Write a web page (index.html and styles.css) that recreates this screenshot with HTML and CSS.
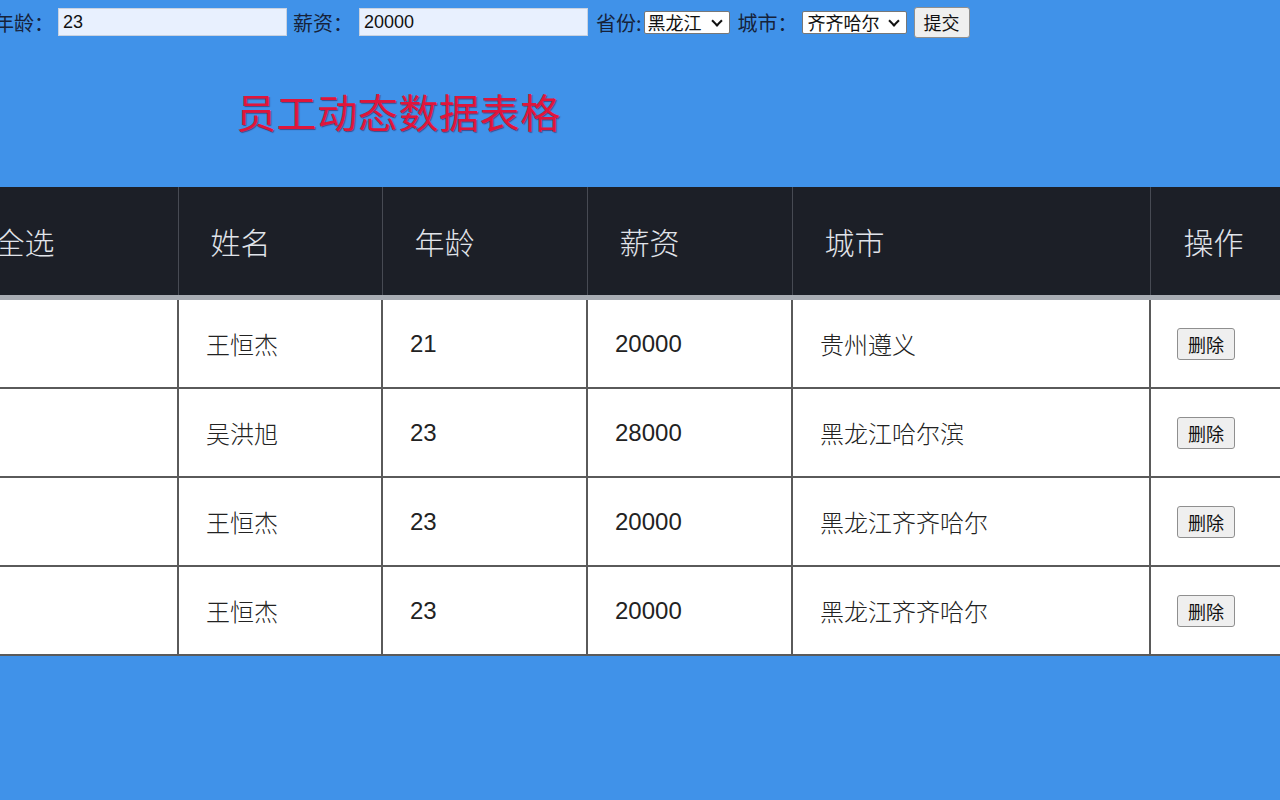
FILE: index.html
```html
<!DOCTYPE html>
<html lang="zh">
<head>
<meta charset="utf-8">
<title>员工动态数据表格</title>
<link rel="stylesheet" href="styles.css">
</head>
<body>
<div class="page">
  <form class="form-row">
    <label class="lbl lbl-first">年龄：</label>
    <input class="field" type="text" value="23">
    <label class="lbl lbl-gap">薪资：</label>
    <input class="field" type="text" value="20000">
    <label class="lbl lbl-gap2">省份:</label>
    <span class="sel-wrap"><select class="sel sel-prov"><option>黑龙江</option></select></span>
    <label class="lbl lbl-gap3">城市：</label>
    <span class="sel-wrap"><select class="sel sel-city"><option>齐齐哈尔</option></select></span>
    <button class="btn-submit" type="button">提交</button>
  </form>

  <h1 class="title">员工动态数据表格</h1>

  <table class="grid">
    <colgroup>
      <col class="c1"><col class="c2"><col class="c3"><col class="c4"><col class="c5"><col class="c6">
    </colgroup>
    <thead>
      <tr>
        <th>全选</th><th>姓名</th><th>年龄</th><th>薪资</th><th>城市</th><th>操作</th>
      </tr>
    </thead>
    <tbody>
      <tr><td></td><td>王恒杰</td><td class="num">21</td><td class="num">20000</td><td>贵州遵义</td><td class="op"><button class="btn-del" type="button">删除</button></td></tr>
      <tr><td></td><td>吴洪旭</td><td class="num">23</td><td class="num">28000</td><td>黑龙江哈尔滨</td><td class="op"><button class="btn-del" type="button">删除</button></td></tr>
      <tr><td></td><td>王恒杰</td><td class="num">23</td><td class="num">20000</td><td>黑龙江齐齐哈尔</td><td class="op"><button class="btn-del" type="button">删除</button></td></tr>
      <tr><td></td><td>王恒杰</td><td class="num">23</td><td class="num">20000</td><td>黑龙江齐齐哈尔</td><td class="op"><button class="btn-del" type="button">删除</button></td></tr>
    </tbody>
  </table>
</div>
</body>
</html>
```

FILE: styles.css
```css
html, body {
  margin: 0;
  padding: 0;
  overflow: hidden;
  background: #4092e9;
}

body {
  width: 1280px;
  height: 800px;
  font-family: "Liberation Sans", "Noto Sans CJK SC", sans-serif;
}

.page {
  margin-left: -6px;
}

.form-row {
  display: flex;
  align-items: center;
  height: 44px;
  margin: 0;
}

.lbl {
  font-family: "Noto Sans CJK SC", sans-serif;
  font-size: 20px;
  color: #16223a;
  white-space: nowrap;
}

.lbl-first { margin-right: 4px; }
.lbl-gap { margin-left: 6px; margin-right: 6px; }
.lbl-gap2 { margin-left: 8px; margin-right: 2px; }
.lbl-gap3 { margin-left: 8px; margin-right: 4px; }

.field {
  box-sizing: border-box;
  width: 229px;
  height: 28px;
  padding: 1px 4px;
  border: 1px solid #c9d2e0;
  background: #e8f0fe;
  font-family: "Liberation Sans", "Noto Sans CJK SC", sans-serif;
  font-size: 18px;
  color: #111;
}

.sel-wrap {
  position: relative;
  display: inline-flex;
}

.sel-wrap::after {
  content: "";
  position: absolute;
  top: 6px;
  right: 9px;
  width: 6px;
  height: 6px;
  border-right: 2px solid #111;
  border-bottom: 2px solid #111;
  transform: rotate(45deg);
  pointer-events: none;
}

.sel {
  box-sizing: border-box;
  height: 23px;
  padding: 0 0 0 3px;
  border: 1px solid #777;
  border-radius: 2px;
  background: #fff;
  font-family: "Noto Sans CJK SC", sans-serif;
  font-size: 18px;
  line-height: 21px;
  color: #111;
  appearance: none;
  -webkit-appearance: none;
}

.sel-prov { width: 86px; }
.sel-city { width: 105px; padding-left: 5px; }

.btn-submit {
  box-sizing: border-box;
  width: 56px;
  height: 31px;
  margin-left: 7px;
  padding: 0;
  border: 1px solid #8f8f8f;
  border-radius: 3px;
  background: #efefef;
  font-family: "Noto Sans CJK SC", sans-serif;
  font-size: 18px;
  color: #111;
}

.title {
  margin: 37px 0 0 242px;
  height: 60px;
  line-height: 60px;
  font-family: "Noto Sans CJK SC", sans-serif;
  font-size: 40px;
  font-weight: 400;
  letter-spacing: 0.6px;
  color: #e0153b;
  text-shadow: 1px 1px 1px rgba(60, 30, 80, 0.6);
}

.grid {
  margin-top: 46px;
  margin-left: -33px;
  border-collapse: collapse;
  table-layout: fixed;
  width: 1388px;
}

.c1 { width: 216px; }
.c2 { width: 204px; }
.c3 { width: 205px; }
.c4 { width: 205px; }
.c5 { width: 358px; }
.c6 { width: 200px; }

.grid th {
  height: 108px;
  padding: 0 0 0 32px;
  text-align: left;
  background: #1c1f27;
  color: #e1e4ea;
  font-family: "Noto Sans CJK SC", sans-serif;
  font-size: 30px;
  font-weight: 300;
  border-left: 1px solid #474a53;
  border-right: 1px solid #474a53;
  border-bottom: 5px solid #a8acb3;
}

.grid th:last-child { padding-left: 33px; }

.grid td {
  height: 87px;
  padding: 0 0 0 27px;
  background: #fff;
  color: #222;
  font-size: 24px;
  font-weight: 300;
  border: 2px solid #5a5a5a;
  vertical-align: middle;
}

.grid td.op { padding-left: 26px; }

.btn-del {
  box-sizing: border-box;
  width: 58px;
  height: 32px;
  padding: 0;
  border: 1px solid #8f8f8f;
  border-radius: 3px;
  background: #efefef;
  font-family: "Noto Sans CJK SC", sans-serif;
  font-size: 18px;
  color: #111;
}
```
